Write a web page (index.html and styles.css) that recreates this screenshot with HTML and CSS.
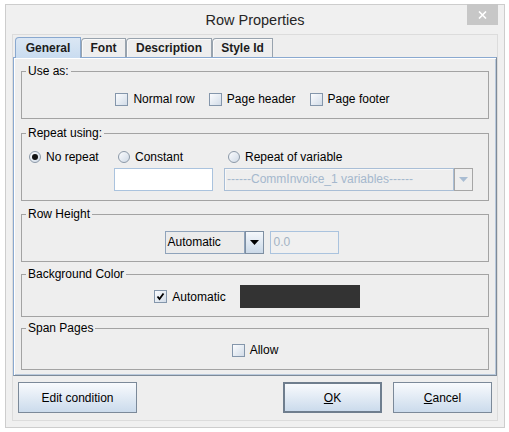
FILE: index.html
```html
<!DOCTYPE html>
<html lang="en">
<head>
  <meta charset="UTF-8">
  <title>Row Properties</title>
  <link rel="stylesheet" href="styles.css">
</head>
<body>

<div class="dialog">
  <div class="titlebar">
    <span class="title">Row Properties</span>
    <button class="close" aria-label="Close">
      <svg width="9" height="8" viewBox="0 0 9 8"><path d="M1 0.5 L8 7.5 M8 0.5 L1 7.5" stroke="#fff" stroke-width="1.6"/></svg>
    </button>
  </div>

  <div class="content">
    <div class="tabs">
      <div class="tab tab-general active">General</div>
      <div class="tab tab-font">Font</div>
      <div class="tab tab-desc">Description</div>
      <div class="tab tab-style">Style Id</div>
    </div>

    <div class="panel">
      <fieldset class="group group-use">
        <legend>Use as:</legend>
        <div class="row row-use">
          <label class="option"><span class="check"></span>Normal row</label>
          <label class="option"><span class="check"></span>Page header</label>
          <label class="option"><span class="check"></span>Page footer</label>
        </div>
      </fieldset>

      <fieldset class="group group-repeat">
        <legend>Repeat using:</legend>
        <div class="repeat-grid">
          <label class="option radio-option"><span class="radio on"></span>No repeat</label>
          <label class="option radio-option"><span class="radio"></span>Constant</label>
          <label class="option radio-option"><span class="radio"></span>Repeat of variable</label>
          <span></span>
          <div class="textfield"></div>
          <div class="combo combo-disabled">
            <span class="combo-value">------CommInvoice_1 variables------</span>
            <span class="combo-arrow"><svg width="9" height="5" viewBox="0 0 9 5"><polygon points="0,0 9,0 4.5,5" fill="#a9bdd3"/></svg></span>
          </div>
        </div>
      </fieldset>

      <fieldset class="group group-height">
        <legend>Row Height</legend>
        <div class="row row-height">
          <div class="combo combo-small">
            <span class="combo-value">Automatic</span>
            <span class="combo-arrow"><svg width="9" height="5" viewBox="0 0 9 5"><polygon points="0,0 9,0 4.5,5" fill="#000"/></svg></span>
          </div>
          <div class="textfield textfield-disabled">0.0</div>
        </div>
      </fieldset>

      <fieldset class="group group-color">
        <legend>Background Color</legend>
        <div class="row row-color">
          <label class="option"><span class="check"><svg width="11" height="11" viewBox="0 0 11 11"><path d="M2.5 5.5 L4.5 8 L8.5 2.5" stroke="#000" stroke-width="1.8" fill="none"/></svg></span>Automatic</label>
          <div class="swatch"></div>
        </div>
      </fieldset>

      <fieldset class="group group-span">
        <legend>Span Pages</legend>
        <div class="row row-span">
          <label class="option"><span class="check"></span>Allow</label>
        </div>
      </fieldset>
    </div>

    <div class="buttons">
      <button class="btn btn-wide">Edit condition</button>
      <button class="btn btn-default"><u>O</u>K</button>
      <button class="btn"><u>C</u>ancel</button>
    </div>
  </div>
</div>

</body>
</html>
```

FILE: styles.css
```css
* {
  box-sizing: border-box;
}

body {
  margin: 0;
  background: #fff;
  font-family: "Liberation Sans", Arial, sans-serif;
  font-size: 12px;
  color: #000;
}

.dialog {
  margin: 4px 0 0 5px;
  width: 500px;
  height: 424px;
  border: 1px solid #cdcdcd;
  background: #f0f0f0;
  display: flex;
  flex-direction: column;
}

.titlebar {
  height: 29px;
  flex-shrink: 0;
  display: grid;
  grid-template-columns: 1fr auto 1fr;
  align-items: center;
}

.title {
  grid-column: 2;
  font-size: 14.5px;
  color: #262626;
}

.close {
  grid-column: 3;
  justify-self: end;
  align-self: start;
  margin: -1px 6px 0 0;
  width: 31px;
  height: 21px;
  padding: 0;
  border: none;
  background: #c7c7c7;
  display: flex;
  align-items: center;
  justify-content: center;
}

.content {
  flex: 1;
  margin: 0 6px 6px;
  border: 1px solid #dcdcdc;
  background: #eeeeee;
  padding-top: 2px;
  display: flex;
  flex-direction: column;
}

/* tabs */

.tabs {
  display: flex;
  align-items: flex-end;
  height: 20px;
  margin-left: 2px;
}

.tab {
  height: 19px;
  border: 1px solid #98a3ae;
  border-bottom: none;
  border-top-left-radius: 4px;
  background: #eeeeee;
  box-shadow: inset 1px 1px 0 #fafafa;
  font-weight: bold;
  color: #1c1c1c;
  display: flex;
  align-items: center;
  justify-content: center;
}

.tab.active {
  position: relative;
  z-index: 1;
  height: 21px;
  margin-bottom: -1px;
  border-color: #89a8cf;
  background: linear-gradient(#dbe7f4, #c9dcf0);
  box-shadow: none;
}

.tab-general { width: 66px; }
.tab-font { width: 45px; }
.tab-desc { width: 86px; }
.tab-style { width: 61px; }

.panel {
  height: 319px;
  border: 1px solid;
  border-color: #8aa9d0 #7d8a98 #7d8a98 #8aa9d0;
  box-shadow: inset 1px 1px 0 #fff, inset -1px -1px 0 #b9c9dc;
  padding: 6px 7px 0;
  display: flex;
  flex-direction: column;
}

/* groups */

.group {
  margin: 0;
  padding: 0;
  min-width: 0;
  border: 1px solid #a3a3a3;
}

.group legend {
  margin-left: 4px;
  padding: 0 2px;
  line-height: 14px;
}

.group-use { height: 55px; }
.group-repeat { height: 75px; margin-top: 7px; }
.group-height { height: 55px; margin-top: 6px; }
.group-color { height: 50px; margin-top: 5px; }
.group-span { height: 49px; margin-top: 4px; }

.row {
  display: flex;
  justify-content: center;
  align-items: center;
}

.row-use { padding: 11px 5px 0 0; gap: 14px; height: 31px; }
.row-height { padding: 10px 7px 0 0; gap: 6px; }
.row-color { padding: 4px 0 0 4px; gap: 14px; }
.row-span { padding: 5px 0 0 0; height: 25px; }

.option {
  display: inline-flex;
  align-items: center;
  gap: 5px;
  height: 20px;
  white-space: nowrap;
}

.check {
  width: 13px;
  height: 13px;
  border: 1px solid #8496ab;
  background: linear-gradient(135deg, #fbfcfe, #d2dce8);
  display: flex;
  align-items: center;
  justify-content: center;
}

.radio {
  width: 12px;
  height: 12px;
  border: 1px solid #8c99a8;
  border-radius: 50%;
  background: linear-gradient(135deg, #fbfcfe, #d0dae6);
  display: flex;
  align-items: center;
  justify-content: center;
}

.radio.on::after {
  content: "";
  width: 6px;
  height: 6px;
  border-radius: 50%;
  background: #111;
}

.repeat-grid {
  display: grid;
  grid-template-columns: 89px 110px 249px;
  grid-template-rows: 20px 23px;
  row-gap: 1px;
  padding: 7px 0 0 3px;
}

.radio-option {
  padding-left: 4px;
}

.textfield {
  width: 99px;
  height: 23px;
  border: 1px solid #aac3de;
  background: #fff;
}

.textfield-disabled {
  width: 69px;
  background: #f0f0f0;
  color: #a3b3c4;
  padding-left: 3px;
  line-height: 21px;
}

.combo {
  display: flex;
  height: 23px;
}

.combo-value {
  flex: 1;
  border: 1px solid #8fa3bb;
  background: #ebebeb;
  padding-left: 2px;
  line-height: 21px;
  overflow: hidden;
  white-space: nowrap;
}

.combo-arrow {
  width: 19px;
  border: 1px solid #7e8fa2;
  background: linear-gradient(#f4f7fb, #cbd9e8);
  display: flex;
  align-items: center;
  justify-content: center;
}

.combo-small {
  width: 99px;
}

.combo-disabled .combo-value {
  border-color: #a9bed6;
  background: #eeeeee;
  color: #a5b8cd;
  box-shadow: inset 1px 1px 0 #f8f8f8;
}

.combo-disabled .combo-arrow {
  border-color: #a6a6a6;
  background: #eeeeee;
}

.swatch {
  width: 120px;
  height: 23px;
  background: #333333;
}

/* buttons */

.buttons {
  display: flex;
  gap: 11px;
  margin-top: 6px;
  padding: 0 5px;
}

.btn {
  width: 99px;
  height: 31px;
  padding: 0;
  border: 1px solid #7b8999;
  background: linear-gradient(#f8fafd, #cbdbec);
  font-family: inherit;
  font-size: 12px;
  color: #000;
}

.btn-wide {
  width: 119px;
  margin-right: auto;
}

.btn-default {
  border: 2px solid #6f7e8e;
}
```
